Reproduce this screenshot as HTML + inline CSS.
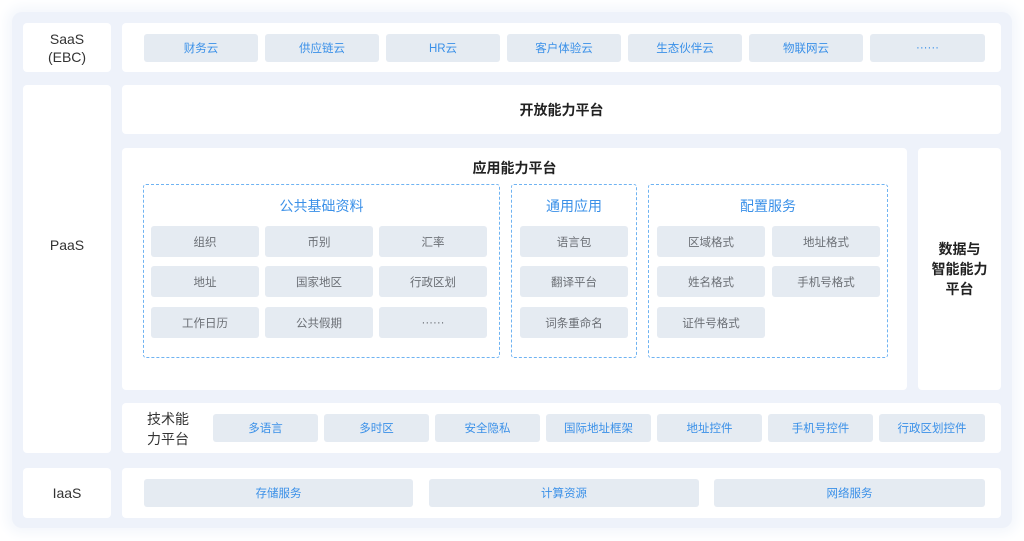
<!DOCTYPE html>
<html><head><meta charset="utf-8"><style>
*{margin:0;padding:0;box-sizing:border-box}
body{width:1024px;height:541px;background:#fff;position:relative;overflow:hidden;font-family:"Liberation Sans","Noto Sans CJK SC",sans-serif}
.bg{position:absolute;left:12px;top:12px;width:1000px;height:516px;background:#eef2fa;border-radius:10px;box-shadow:0 0 12px 6px #f4f7fc}
.w{position:absolute;background:#fff;border-radius:4px;display:flex;align-items:center;justify-content:center;text-align:center;color:#333;font-size:14px;line-height:18px}
.c{position:absolute;background:#e5ebf2;border-radius:3px;display:flex;align-items:center;justify-content:center;font-size:11.5px;color:#3a90e8}
.g{color:#6b6f75}
.d{position:absolute;border:1px dashed #6fb3f2;border-radius:3px}
.t{position:absolute;color:#3a90e8;font-size:14px;text-align:center}
.b{font-weight:bold;color:#222}
</style></head><body>
<div class="bg"></div>
<div class="w" style="left:23px;top:23px;width:88px;height:49px">SaaS<br>(EBC)</div>
<div class="w" style="left:23px;top:85px;width:88px;height:368px"></div>
<div style="position:absolute;left:23px;top:237px;width:88px;text-align:center;font-size:14px;color:#333">PaaS</div>
<div class="w" style="left:23px;top:468px;width:88px;height:50px">IaaS</div>
<div class="w" style="left:122px;top:23px;width:879px;height:49px"></div>
<div class="c" style="left:144px;top:34px;width:114px;height:28px">财务云</div>
<div class="c" style="left:265px;top:34px;width:114px;height:28px">供应链云</div>
<div class="c" style="left:386px;top:34px;width:114px;height:28px">HR云</div>
<div class="c" style="left:507px;top:34px;width:114px;height:28px">客户体验云</div>
<div class="c" style="left:628px;top:34px;width:114px;height:28px">生态伙伴云</div>
<div class="c" style="left:749px;top:34px;width:114px;height:28px">物联网云</div>
<div class="c" style="left:870px;top:34px;width:115px;height:28px">······</div>
<div class="w b" style="left:122px;top:85px;width:879px;height:49px">开放能力平台</div>
<div class="w" style="left:122px;top:148px;width:785px;height:242px"></div>
<div class="t b" style="left:122px;top:158px;width:785px">应用能力平台</div>
<div class="w b" style="left:918px;top:148px;width:83px;height:242px;line-height:20px">数据与<br>智能能力<br>平台</div>
<div class="d" style="left:143px;top:184px;width:357px;height:174px"></div>
<div class="d" style="left:511px;top:184px;width:126px;height:174px"></div>
<div class="d" style="left:648px;top:184px;width:240px;height:174px"></div>
<div class="t" style="left:143px;top:196px;width:357px">公共基础资料</div>
<div class="t" style="left:511px;top:196px;width:126px">通用应用</div>
<div class="t" style="left:648px;top:196px;width:240px">配置服务</div>
<div class="c g" style="left:151px;top:226px;width:108px;height:31px">组织</div>
<div class="c g" style="left:265px;top:226px;width:108px;height:31px">币别</div>
<div class="c g" style="left:379px;top:226px;width:108px;height:31px">汇率</div>
<div class="c g" style="left:151px;top:266px;width:108px;height:31px">地址</div>
<div class="c g" style="left:265px;top:266px;width:108px;height:31px">国家地区</div>
<div class="c g" style="left:379px;top:266px;width:108px;height:31px">行政区划</div>
<div class="c g" style="left:151px;top:307px;width:108px;height:31px">工作日历</div>
<div class="c g" style="left:265px;top:307px;width:108px;height:31px">公共假期</div>
<div class="c g" style="left:379px;top:307px;width:108px;height:31px">······</div>
<div class="c g" style="left:520px;top:226px;width:108px;height:31px">语言包</div>
<div class="c g" style="left:520px;top:266px;width:108px;height:31px">翻译平台</div>
<div class="c g" style="left:520px;top:307px;width:108px;height:31px">词条重命名</div>
<div class="c g" style="left:657px;top:226px;width:108px;height:31px">区域格式</div>
<div class="c g" style="left:772px;top:226px;width:108px;height:31px">地址格式</div>
<div class="c g" style="left:657px;top:266px;width:108px;height:31px">姓名格式</div>
<div class="c g" style="left:772px;top:266px;width:108px;height:31px">手机号格式</div>
<div class="c g" style="left:657px;top:307px;width:108px;height:31px">证件号格式</div>
<div class="w" style="left:122px;top:403px;width:879px;height:50px"></div>
<div style="position:absolute;left:147px;top:409px;font-size:14px;line-height:20px;color:#333">技术能<br>力平台</div>
<div class="c" style="left:213px;top:414px;width:105px;height:28px">多语言</div>
<div class="c" style="left:324px;top:414px;width:105px;height:28px">多时区</div>
<div class="c" style="left:435px;top:414px;width:105px;height:28px">安全隐私</div>
<div class="c" style="left:546px;top:414px;width:105px;height:28px">国际地址框架</div>
<div class="c" style="left:657px;top:414px;width:105px;height:28px">地址控件</div>
<div class="c" style="left:768px;top:414px;width:105px;height:28px">手机号控件</div>
<div class="c" style="left:879px;top:414px;width:106px;height:28px">行政区划控件</div>
<div class="w" style="left:122px;top:468px;width:879px;height:50px"></div>
<div class="c" style="left:144px;top:479px;width:269px;height:28px">存储服务</div>
<div class="c" style="left:429px;top:479px;width:270px;height:28px">计算资源</div>
<div class="c" style="left:714px;top:479px;width:271px;height:28px">网络服务</div>
</body></html>
